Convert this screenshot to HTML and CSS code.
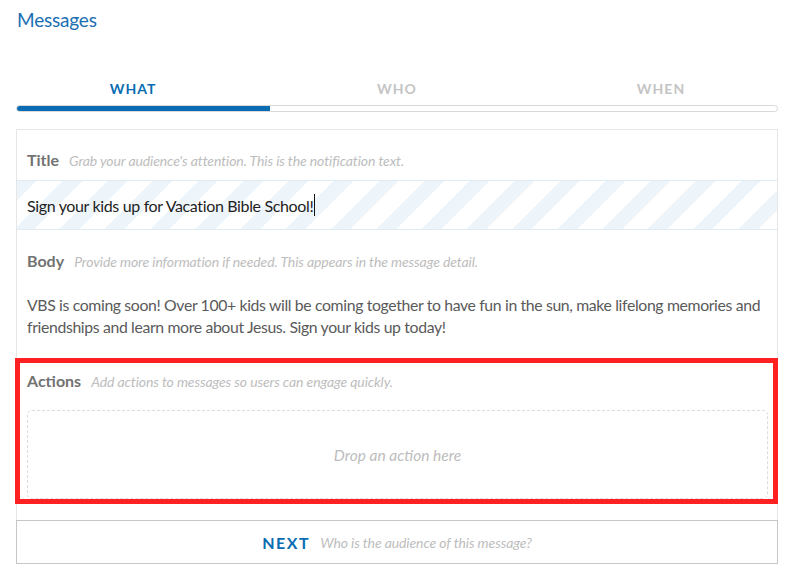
FILE: index.html
```html
<!DOCTYPE html>
<html>
<head>
<meta charset="utf-8">
<link rel="stylesheet" href="styles.css">
</head>
<body>
<div class="page">
  <h1 class="page-title">Messages</h1>
  <div class="tabs">
    <div class="tab active">WHAT</div>
    <div class="tab">WHO</div>
    <div class="tab">WHEN</div>
  </div>
  <div class="progress"><div class="progress-fill"></div></div>

  <div class="card">
    <div class="field-label"><span class="label">Title</span><span class="hint">Grab your audience's attention. This is the notification text.</span></div>
    <div class="title-input"><span class="title-text">Sign your kids up for Vacation Bible School!</span><span class="caret"></span></div>

    <div class="field-label body-label"><span class="label">Body</span><span class="hint">Provide more information if needed. This appears in the message detail.</span></div>
    <p class="body-text">VBS is coming soon! Over 100+ kids will be coming together to have fun in the sun, make lifelong memories and friendships and learn more about Jesus. Sign your kids up today!</p>

    <div class="actions">
      <div class="field-label actions-label"><span class="label">Actions</span><span class="hint">Add actions to messages so users can engage quickly.</span></div>
      <div class="dropzone">Drop an action here</div>
    </div>
  </div>
  <div class="next">
    <span class="next-label">NEXT</span><span class="next-hint">Who is the audience of this message?</span>
  </div>
</div>
</body>
</html>
```
FILE: styles.css
```css
html, body {
  margin: 0;
  padding: 0;
  background: #fff;
}
body {
  font-family: Lato, "Noto Sans", "Liberation Sans", sans-serif;
  color: #555;
}
.page {
  padding: 8px 14px 0 16px;
}
.page-title {
  margin: 0;
  font-size: 19px;
  line-height: 24px;
  font-weight: 400;
  letter-spacing: -0.2px;
  color: #1a6fb3;
  padding-left: 1px;
}
.tabs {
  display: flex;
  margin: 47px -15px 0 -15px;
  height: 20px;
}
.tab {
  flex: 1;
  text-align: center;
  font-size: 14px;
  line-height: 20px;
  font-weight: 700;
  letter-spacing: 1px;
  color: #c4c4c4;
}
.tab.active {
  color: #0a6cb3;
}
.progress {
  margin-top: 6px;
  height: 5px;
  border: 1px solid #d9d9d9;
  border-radius: 4px;
  overflow: hidden;
  background: #fff;
}
.progress-fill {
  width: 33.3%;
  height: 100%;
  background: #0a6cb3;
}
.card {
  margin-top: 17px;
  border: 1px solid #e6e6e6;
  border-bottom: none;
  padding-bottom: 16px;
}
.field-label {
  display: flex;
  align-items: baseline;
  height: 20px;
  padding: 20px 10px 0;
  line-height: 20px;
  overflow: hidden;
}
.label {
  font-size: 16px;
  font-weight: 700;
  color: #727272;
}
.hint {
  margin-left: 10px;
  font-size: 14px;
  font-style: italic;
  letter-spacing: -0.1px;
  color: #bdbdbd;
}
.title-input {
  margin-top: 10px;
  height: 48px;
  border-top: 1px solid #dfebf3;
  border-bottom: 1px solid #dfebf3;
  padding: 0 10px;
  display: flex;
  align-items: center;
  background: repeating-linear-gradient(135deg, #eef5fa 0 14px, #ffffff 14px 32px);
}
.title-text {
  font-size: 16px;
  letter-spacing: -0.35px;
  color: #1e1e1e;
}
.caret {
  display: inline-block;
  width: 1px;
  height: 22px;
  background: #111;
  margin-left: 1px;
}
.body-label {
  padding-top: 21px;
}
.body-text {
  margin: 23px 0 0;
  padding: 0 4px 0 10px;
  font-size: 15.8px;
  line-height: 22px;
  letter-spacing: -0.36px;
  color: #5a5a5a;
}
.actions {
  margin: 20px -1px 0 -2px;
  border: 5px solid #ff2121;
  padding: 0 5px 0 7px;
}
.actions-label {
  padding: 8px 0 0;
}
.dropzone {
  margin-top: 19px;
  height: 87px;
  border: 1px dashed #dcdcdc;
  border-radius: 5px;
  display: flex;
  align-items: center;
  justify-content: center;
  font-size: 15.5px;
  font-style: italic;
  color: #bdbdbd;
}
.next {
  height: 42px;
  border: 1px solid #c6c6c6;
  display: flex;
  align-items: center;
  justify-content: center;
}
.next-label {
  font-size: 16px;
  font-weight: 700;
  letter-spacing: 1.5px;
  color: #0a6cb3;
}
.next-hint {
  margin-left: 10px;
  font-size: 14px;
  font-style: italic;
  letter-spacing: -0.1px;
  color: #bdbdbd;
}
```
